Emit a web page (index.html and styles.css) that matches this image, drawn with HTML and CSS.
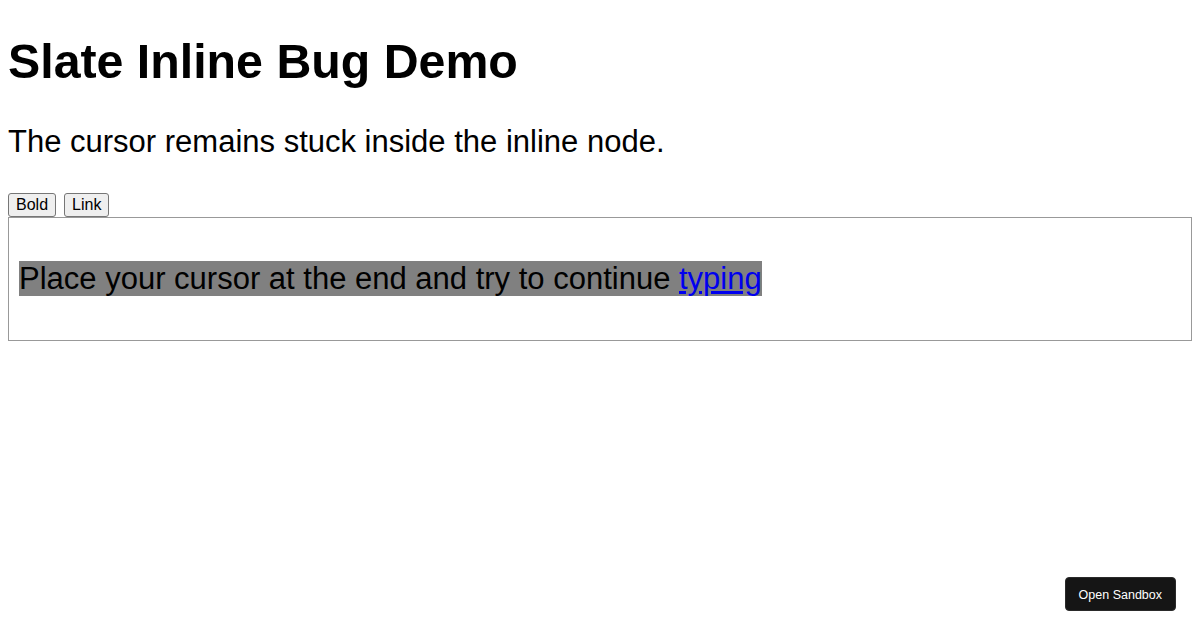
FILE: index.html
```html
<!DOCTYPE html>
<html>
<head>
<meta charset="utf-8">
<title>Slate Inline Bug Demo</title>
<link rel="stylesheet" href="styles.css">
</head>
<body>
<h1 class="title">Slate Inline Bug Demo</h1>
<p class="lead">The cursor remains stuck inside the inline node.</p>
<div class="toolbar"><button class="tool">Bold</button><button class="tool">Link</button></div>
<div class="editor" contenteditable="true">
<p class="line"><span class="sel">Place your cursor at the end and try to continue <a class="inline-link" href="#">typing</a></span></p>
</div>
<a class="sandbox" href="#">Open Sandbox</a>
</body>
</html>
```
FILE: styles.css
```css
body {
  margin: 8px;
  font-family: "Liberation Sans", Arial, sans-serif;
  color: #000;
  background: #fff;
}
.title {
  font-size: 48.3px;
  margin: 25px 0 35px;
  font-weight: bold;
}
.lead {
  font-size: 31px;
  margin: 31px 0;
}
.toolbar {
  display: flex;
  gap: 8px;
  margin-top: 33px;
}
.tool {
  font-family: "Liberation Sans", Arial, sans-serif;
  font-size: 16px;
  padding: 2px 7px;
  border: 1px solid #767676;
  border-radius: 3px;
  background: #efefef;
  color: #000;
}
.editor {
  border: 1px solid #999;
  padding: 10px;
  outline: none;
}
.line {
  font-size: 31px;
  line-height: 1.25;
  margin: 32px 0 31px;
}
.sel {
  background: #808080;
}
.inline-link {
  color: #0000ee;
  text-decoration: underline;
}
.sandbox {
  position: fixed;
  right: 24px;
  bottom: 19px;
  background: #151515;
  color: #fff;
  font-family: "Liberation Sans", Arial, sans-serif;
  font-size: 12.5px;
  text-decoration: none;
  padding: 0 13px;
  height: 34px;
  line-height: 34px;
  border-radius: 4px;
  border: 1px solid #2a2a2a;
  box-sizing: border-box;
}
```
